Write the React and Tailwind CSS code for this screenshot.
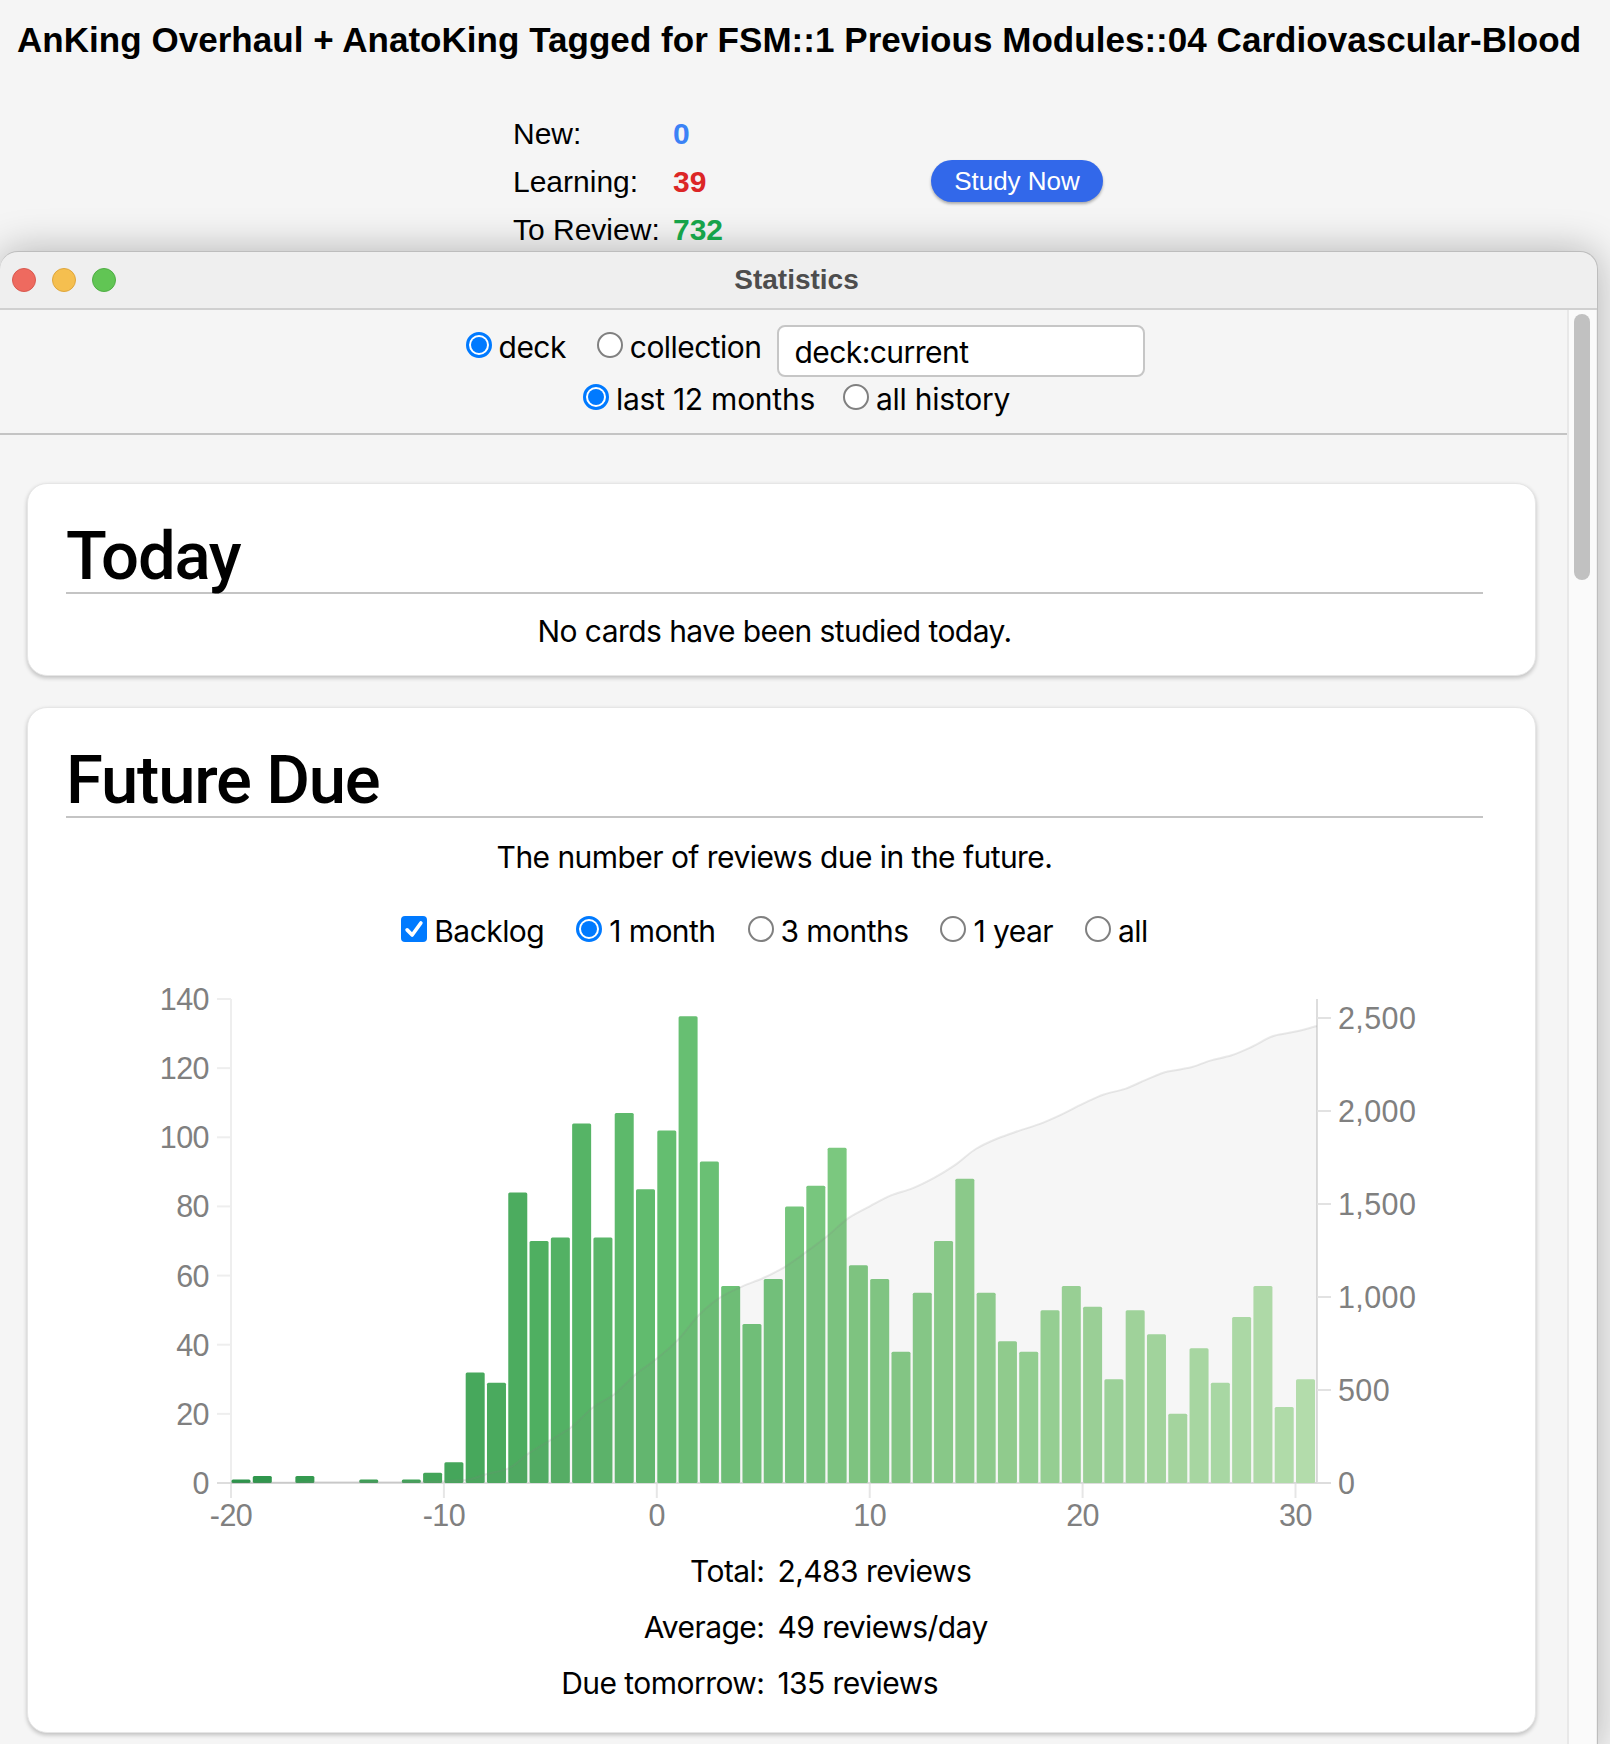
import React from 'react';

const sans = "font-['Inter',sans-serif]";

const counts = [1,2,0,2,0,0,1,0,1,3,6,32,29,84,70,71,104,71,107,85,102,135,93,57,46,59,80,86,97,63,59,38,55,70,88,55,41,38,50,57,51,30,50,43,20,39,29,48,57,22,30];

const stops = [
  [0, 46, 148, 76],
  [0.26, 76, 172, 95],
  [0.4, 100, 190, 112],
  [0.7, 143, 208, 141],
  [1, 183, 227, 175],
];

function barColor(t) {
  let i = 0;
  while (i < stops.length - 2 && t > stops[i + 1][0]) i++;
  const a = stops[i];
  const b = stops[i + 1];
  const k = (t - a[0]) / (b[0] - a[0]);
  const c = [1, 2, 3].map(n => Math.round(a[n] + (b[n] - a[n]) * k));
  return `rgb(${c[0]},${c[1]},${c[2]})`;
}

const X0 = 231;
const BAND = 21.29;
const Y0 = 1483;
const PER_CARD = 3.457;
const PER_TOTAL = 465 / 2500;

// same shape as d3's curveMonotoneX
function monotonePath(pts) {
  const n = pts.length;
  const slope = [];
  for (let i = 0; i < n - 1; i++) {
    slope.push((pts[i + 1][1] - pts[i][1]) / (pts[i + 1][0] - pts[i][0]));
  }
  const m = pts.map((_, i) => {
    if (i === 0) return slope[0];
    if (i === n - 1) return slope[n - 2];
    const a = slope[i - 1];
    const b = slope[i];
    return a * b <= 0 ? 0 : (2 * a * b) / (a + b);
  });
  let d = `M${pts[0][0]},${pts[0][1]}`;
  for (let i = 1; i < n; i++) {
    const h = (pts[i][0] - pts[i - 1][0]) / 3;
    d += ` C${pts[i - 1][0] + h},${pts[i - 1][1] + m[i - 1] * h} ${pts[i][0] - h},${pts[i][1] - m[i] * h} ${pts[i][0]},${pts[i][1]}`;
  }
  return d;
}

function FutureChart() {
  let sum = 0;
  const pts = [[X0, Y0]];
  counts.forEach((c, i) => {
    sum += c;
    pts.push([X0 + BAND * (i + 1), Y0 - sum * PER_TOTAL]);
  });
  const line = monotonePath(pts);
  const area = `${line} L${pts[pts.length - 1][0]},${Y0} L${X0},${Y0} Z`;
  const leftTicks = [0, 20, 40, 60, 80, 100, 120, 140];
  const rightTicks = [0, 500, 1000, 1500, 2000, 2500];
  const xTicks = [-20, -10, 0, 10, 20, 30];
  const label = { fontFamily: "'Liberation Sans', sans-serif", fontSize: 30.5, fill: '#808080' };

  return (
    <svg viewBox="66 975 1417 560" width="1417" height="560" className="block">
      <line x1={X0} y1="999" x2={X0} y2={Y0} stroke="#eeeeee" strokeWidth="2" />
      <line x1="1317" y1="999" x2="1317" y2={Y0} stroke="#dddddd" strokeWidth="2" />
      {leftTicks.map(t => {
        const y = Y0 - t * PER_CARD;
        return (
          <g key={t}>
            <line x1="217" y1={y} x2={X0} y2={y} stroke="#eeeeee" strokeWidth="2" />
            <text x="209" y={y + 11} textAnchor="end" style={label}>{t}</text>
          </g>
        );
      })}
      {rightTicks.map(t => {
        const y = Y0 - t * PER_TOTAL;
        return (
          <g key={t}>
            <line x1="1317" y1={y} x2="1331" y2={y} stroke="#e2e2e2" strokeWidth="2" />
            <text x="1338" y={y + 11} letterSpacing="0.4" style={label}>{t.toLocaleString('en-US')}</text>
          </g>
        );
      })}
      {xTicks.map(t => {
        const x = X0 + (t + 20) * BAND;
        return (
          <g key={t}>
            <line x1={x} y1={Y0} x2={x} y2="1498" stroke="#e6e6e6" strokeWidth="2" />
            <text x={x} y="1526" textAnchor="middle" style={label}>{t}</text>
          </g>
        );
      })}
      <line x1="217" y1={Y0} x2="1331" y2={Y0} stroke="#dddddd" strokeWidth="2" />
      {counts.map((c, i) => c > 0 && (
        <rect
          key={i}
          x={X0 + BAND * i + 0.5}
          y={Y0 - c * PER_CARD}
          width="19"
          height={c * PER_CARD}
          rx="1.5"
          fill={barColor(i / 50)}
        />
      ))}
      <path d={area} fill="#808080" fillOpacity="0.07" />
      <path d={line} fill="none" stroke="#808080" strokeOpacity="0.17" strokeWidth="2" />
    </svg>
  );
}

function Radio({ checked, label, className = '' }) {
  return (
    <label className={`inline-flex items-center gap-[7px] ${className}`}>
      {checked ? (
        <span className="w-[26px] h-[26px] rounded-full border-[3px] border-[#007aff] bg-white flex items-center justify-center -translate-y-[2px]">
          <span className="w-[16px] h-[16px] rounded-full bg-[#007aff]"></span>
        </span>
      ) : (
        <span className="w-[26px] h-[26px] rounded-full border-2 border-[#808080] bg-white -translate-y-[2px]"></span>
      )}
      <span>{label}</span>
    </label>
  );
}

function Card({ title, children, className = '' }) {
  return (
    <section className={`ml-[27px] w-[1509px] rounded-[20px] bg-white border border-[#e6e6e6] shadow-[0_2px_4px_rgba(0,0,0,0.22)] pl-[38px] pr-[52px] ${className}`}>
      <h1 className="h-[110px] flex items-end border-b-2 border-[#c4c4c4] text-[67px] leading-[72px] font-medium tracking-[-1.2px] text-black font-['Roboto',sans-serif]">
        {title}
      </h1>
      {children}
    </section>
  );
}

export default function App() {
  return (
    <div className="w-[1610px] h-[1744px] overflow-hidden bg-[#f5f5f5] text-black">
      <h1 className="pl-[17px] pt-[20px] text-[35px] leading-[40px] tracking-[0.04px] font-bold font-['Liberation_Sans',sans-serif] whitespace-nowrap">
        AnKing Overhaul + AnatoKing Tagged for FSM::1 Previous Modules::04 Cardiovascular-Blood
      </h1>

      <div className="flex items-center pl-[513px] mt-[51px] h-[140px] text-[30px] leading-[48px] font-['Liberation_Sans',sans-serif]">
        <div className="grid grid-cols-[160px_auto] w-[418px] pt-[2px]">
          <div>New:</div>
          <div className="font-bold text-[#3b82f6]">0</div>
          <div>Learning:</div>
          <div className="font-bold text-[#dc2626]">39</div>
          <div>To Review:</div>
          <div className="font-bold text-[#16a34a]">732</div>
        </div>
        <button className="w-[172px] h-[42px] rounded-full bg-[#3268ea] text-white text-[26px] leading-[42px] shadow-[0_2px_3px_rgba(0,0,0,0.3)]">
          Study Now
        </button>
      </div>

      <div className="w-[1598px] h-[1500px] rounded-t-[18px] bg-[#efefef] border border-[#bdbdbd] border-l-0 shadow-[0_0_40px_rgba(0,0,0,0.28)]">
        <div className="relative h-[58px] flex items-center justify-center border-b-2 border-[#d0d0d0]">
          <div className="absolute left-[12px] top-[16px] flex gap-[16px]">
            <span className="w-[24px] h-[24px] rounded-full bg-[#ee6a5f] border border-[#d9594f]"></span>
            <span className="w-[24px] h-[24px] rounded-full bg-[#f5bf4f] border border-[#dfa63c]"></span>
            <span className="w-[24px] h-[24px] rounded-full bg-[#61c554] border border-[#4fae44]"></span>
          </div>
          <span className="text-[28px] font-bold text-[#4d4d4d] font-['Liberation_Sans',sans-serif] -translate-x-[2px]">Statistics</span>
        </div>

        <div className="flex h-[1440px]">
          <div className="w-[1567px] bg-[#f5f5f5]">
            <div className={`h-[125px] border-b-2 border-[#c4c4c4] flex flex-col items-center pl-[44px] text-[30px] tracking-[-0.55px] leading-[52px] ${sans}`}>
              <div className="flex items-center gap-[16px] h-[74px]">
                <Radio checked label="deck" />
                <Radio label="collection" className="ml-[15px]" />
                <input
                  defaultValue="deck:current"
                  className="w-[368px] h-[52px] pl-[15px] pt-[2px] bg-white border-2 border-[#c6c6c6] rounded-[8px] outline-none translate-y-[4px]"
                />
              </div>
              <div className="flex items-center gap-[28px] -mt-[11px] pr-[18px] tracking-[-0.25px]">
                <Radio checked label="last 12 months" />
                <Radio label="all history" />
              </div>
            </div>

            <div className={`pt-[48px] text-[30px] tracking-[-0.55px] ${sans}`}>
              <Card title="Today" className="h-[193px]">
                <p className="mt-[16px] text-center leading-[42px]">No cards have been studied today.</p>
              </Card>

              <Card title="Future Due" className="mt-[31px]">
                <p className="mt-[18px] text-center leading-[42px]">The number of reviews due in the future.</p>
                <div className="mt-[32px] h-[42px] flex items-center justify-center gap-[32px] leading-[42px]">
                  <label className="inline-flex items-center gap-[7px]">
                    <span className="w-[26px] h-[26px] rounded-[4px] bg-[#007aff] flex items-center justify-center -translate-y-[2px]">
                      <svg viewBox="0 0 24 24" className="w-[22px] h-[22px]" fill="none" stroke="white" strokeWidth="4" strokeLinecap="round" strokeLinejoin="round">
                        <path d="M4.5 13 L10 18.5 L19.5 5.5" />
                      </svg>
                    </span>
                    <span>Backlog</span>
                  </label>
                  <Radio checked label="1 month" />
                  <Radio label="3 months" />
                  <Radio label="1 year" />
                  <Radio label="all" />
                </div>
                <div className="mt-[23px]">
                  <FutureChart />
                </div>
                <div className="mt-[8px] pb-[21px] grid grid-cols-[auto_auto] w-max mx-auto gap-x-[13px] leading-[56px]">
                  <div className="text-right">Total:</div>
                  <div>2,483 reviews</div>
                  <div className="text-right">Average:</div>
                  <div>49 reviews/day</div>
                  <div className="text-right">Due tomorrow:</div>
                  <div>135 reviews</div>
                </div>
              </Card>
            </div>
          </div>

          <div className="w-[29px] bg-[#fafafa] border-l-2 border-[#e8e8e8] pt-[4px] pl-[5px]">
            <div className="w-[16px] h-[266px] rounded-full bg-[#c1c1c1]"></div>
          </div>
        </div>
      </div>
    </div>
  );
}
